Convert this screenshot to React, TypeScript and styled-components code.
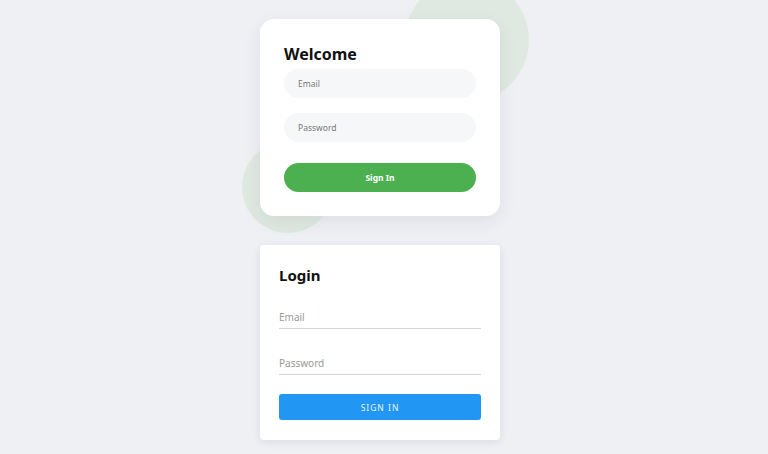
import styled, { createGlobalStyle } from 'styled-components';

const GlobalStyle = createGlobalStyle`
  html, body {
    margin: 0;
    padding: 0;
    background: #eff0f4;
    font-family: "Noto Sans", "Open Sans", sans-serif;
  }
  * {
    box-sizing: border-box;
  }
`;

export default function App() {
  return (
    <>
      <GlobalStyle />
      <Page>
        <WelcomeWrap>
          <Blob size={124} style={{ top: -41, right: -29 }} />
          <Blob size={92} style={{ bottom: -17, left: -18 }} />
          <WelcomeCard>
            <WelcomeTitle>Welcome</WelcomeTitle>
            <PillInput type="email" placeholder="Email" />
            <PillInput type="password" placeholder="Password" />
            <GreenButton>Sign In</GreenButton>
          </WelcomeCard>
        </WelcomeWrap>

        <LoginCard>
          <LoginTitle>Login</LoginTitle>
          <LineInput type="email" placeholder="Email" />
          <LineInput type="password" placeholder="Password" />
          <BlueButton>Sign in</BlueButton>
        </LoginCard>
      </Page>
    </>
  );
}

const Page = styled.div`
  display: flex;
  flex-direction: column;
  align-items: center;
  gap: 29px;
  padding: 19px 8px 0 0;
  min-height: 454px;
  overflow: hidden;
`;

const WelcomeWrap = styled.div`
  position: relative;
  width: 240px;
`;

const Blob = styled.div<{ size: number }>`
  position: absolute;
  width: ${p => p.size}px;
  height: ${p => p.size}px;
  border-radius: 50%;
  background: #dfe9e1;
`;

const WelcomeCard = styled.div`
  position: relative;
  display: flex;
  flex-direction: column;
  padding: 24px;
  background: #fff;
  border-radius: 14px;
  box-shadow: 0 6px 18px rgba(30, 40, 60, 0.08);
`;

const WelcomeTitle = styled.h2`
  margin: 0 0 4px;
  font-size: 16px;
  line-height: 22px;
  font-weight: 700;
  color: #111;
`;

const PillInput = styled.input`
  height: 29px;
  margin-bottom: 15px;
  padding: 0 14px;
  border: none;
  border-radius: 15px;
  background: #f6f7f9;
  font-family: inherit;
  font-size: 8.5px;
  outline: none;

  &::placeholder {
    color: #777;
  }
`;

const GreenButton = styled.button`
  height: 29px;
  margin-top: 6px;
  border: none;
  border-radius: 15px;
  background: #4caf50;
  color: #fff;
  font-family: inherit;
  font-size: 8.5px;
  font-weight: 700;
`;

const LoginCard = styled.div`
  display: flex;
  flex-direction: column;
  width: 240px;
  padding: 19px 19px 20px;
  background: #fff;
  border-radius: 4px;
  box-shadow: 0 2px 8px rgba(30, 40, 60, 0.1);
`;

const LoginTitle = styled.h2`
  margin: 0 0 16px;
  font-size: 15px;
  line-height: 22px;
  font-weight: 700;
  color: #111;
`;

const LineInput = styled.input`
  height: 27px;
  margin-bottom: 19px;
  padding: 3px 0 0;
  border: none;
  border-bottom: 1px solid #d6d6d6;
  background: transparent;
  font-family: inherit;
  font-size: 10px;
  outline: none;

  &::placeholder {
    color: #9a9a9a;
  }
`;

const BlueButton = styled.button`
  height: 26px;
  border: none;
  border-radius: 3px;
  background: #2196f3;
  color: #eaf4ff;
  font-family: inherit;
  font-size: 8.5px;
  letter-spacing: 1px;
  text-transform: uppercase;
`;
